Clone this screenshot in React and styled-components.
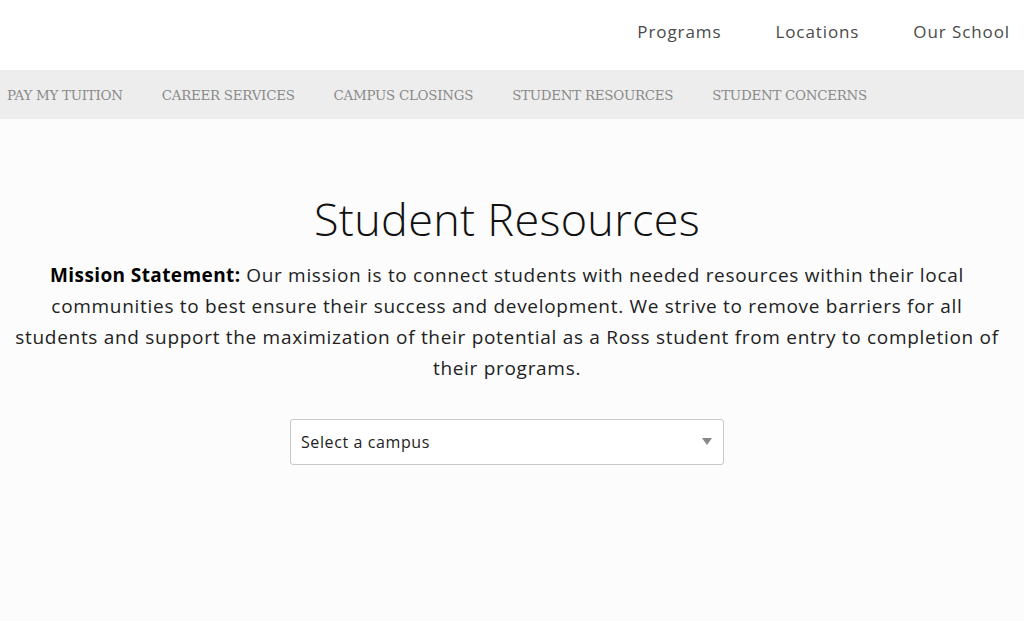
import React from 'react'
import styled, { createGlobalStyle } from 'styled-components'

const GlobalStyle = createGlobalStyle`
    html, body {
        margin: 0;
        padding: 0;
        background: #fcfcfc;
    }
    body {
        font-family: "Open Sans", "Liberation Sans", sans-serif;
        color: #222;
    }
`

const topLinks = ['Programs', 'Locations', 'Our School']
const subLinks = ['PAY MY TUITION', 'CAREER SERVICES', 'CAMPUS CLOSINGS', 'STUDENT RESOURCES', 'STUDENT CONCERNS']

function App() {
    return (
        <Page>
            <GlobalStyle />
            <Header>
                <TopNav>
                    {topLinks.map(link => (
                        <TopLink key={link}>{link}</TopLink>
                    ))}
                </TopNav>
            </Header>

            <SubBar>
                {subLinks.map(link => (
                    <SubLink key={link}>{link}</SubLink>
                ))}
            </SubBar>

            <Content>
                <Title>Student Resources</Title>
                <Mission>
                    <Label>Mission Statement:</Label>{' '}Our mission is to connect students with needed resources within their local communities to best ensure their success and development. We strive to remove barriers for all students and support the maximization of their potential as a Ross student from entry to completion of their programs.
                </Mission>
                <SelectWrap>
                    <CampusSelect defaultValue="">
                        <option value="">Select a campus</option>
                    </CampusSelect>
                    <Caret />
                </SelectWrap>
            </Content>
        </Page>
    )
}

export default App

const Page = styled.div`
    min-height: 100vh;
    background: #fcfcfc;
`

const Header = styled.header`
    height: 70px;
    background: #fff;
    display: flex;
    justify-content: flex-end;
    align-items: center;
`

const TopNav = styled.nav`
    display: flex;
    gap: 54px;
    padding-right: 14px;
    margin-top: -7px;
`

const TopLink = styled.a`
    font-size: 17px;
    color: #4a4a4a;
    letter-spacing: 0.9px;
    cursor: pointer;
`

const SubBar = styled.nav`
    height: 49px;
    background: #ededed;
    display: flex;
    align-items: center;
    gap: 39px;
    padding-left: 7px;
`

const SubLink = styled.a`
    font-family: "DejaVu Serif", "Liberation Serif", serif;
    font-size: 13.4px;
    color: #8a8a8a;
    letter-spacing: -0.25px;
    margin-top: 2px;
    cursor: pointer;
`

const Content = styled.main`
    display: flex;
    flex-direction: column;
    align-items: center;
    padding: 73px 17px 0 7px;
`

const Title = styled.h1`
    margin: 0;
    font-size: 45px;
    font-weight: 300;
    color: #111;
    line-height: 54px;
    letter-spacing: 0.3px;
`

const Mission = styled.p`
    margin: 14px 0 0;
    max-width: 990px;
    text-align: center;
    font-size: 19px;
    line-height: 31px;
    letter-spacing: 0.7px;
    color: #222;
`

const Label = styled.strong`
    font-weight: 700;
    color: #000;
    letter-spacing: 0.4px;
`

const SelectWrap = styled.div`
    position: relative;
    margin-top: 35px;
    width: 434px;
`

const CampusSelect = styled.select`
    appearance: none;
    width: 100%;
    height: 46px;
    padding: 0 36px 0 10px;
    border: 1px solid #c8c8c8;
    border-radius: 3px;
    background: #fff;
    font-family: "Open Sans", "Liberation Sans", sans-serif;
    font-size: 16px;
    letter-spacing: 0.6px;
    color: #222;
`

const Caret = styled.span`
    position: absolute;
    right: 12px;
    top: 19px;
    width: 0;
    height: 0;
    border-left: 5px solid transparent;
    border-right: 5px solid transparent;
    border-top: 7px solid #888;
    pointer-events: none;
`
